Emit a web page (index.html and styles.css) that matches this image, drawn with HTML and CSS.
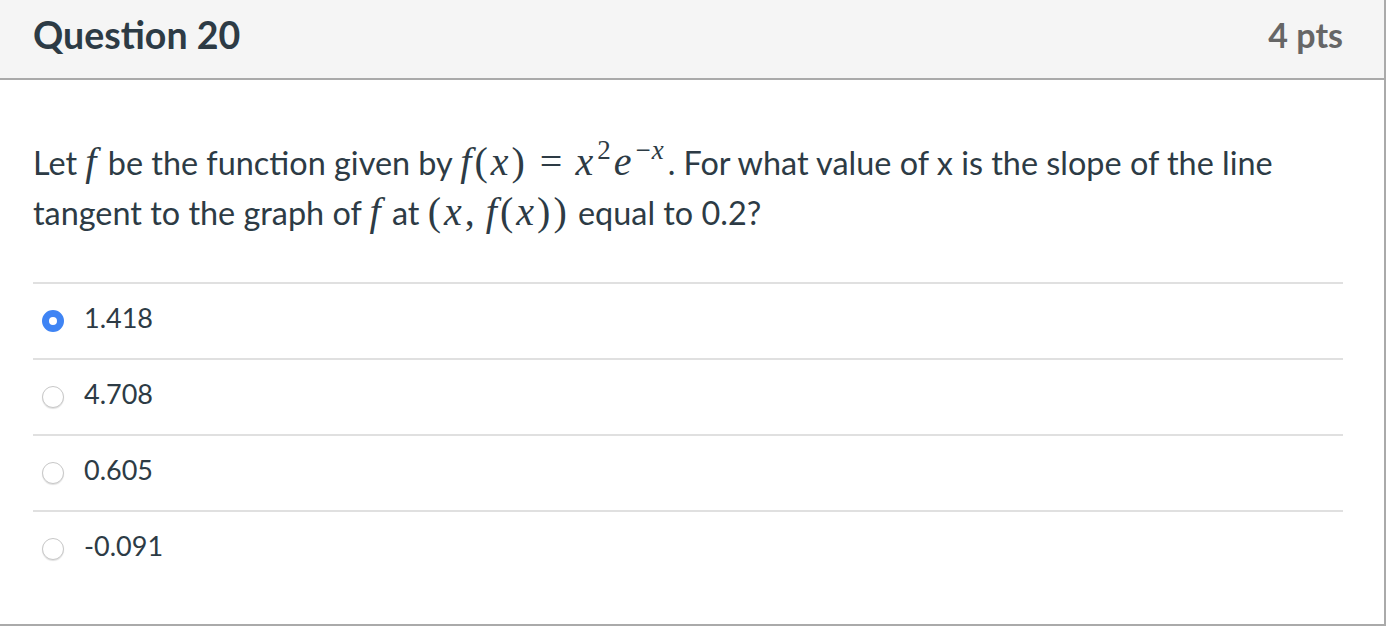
FILE: index.html
```html
<!DOCTYPE html>
<html>
<head>
<meta charset="utf-8">
<link rel="stylesheet" href="styles.css">
</head>
<body>
<div class="card">
  <div class="header">
    <div class="title">Question 20</div>
    <div class="pts">4 pts</div>
  </div>
  <div class="body">
    <div class="qtext">Let <span class="m">f</span> be the function given by <span class="m">f</span><span class="mr">(</span><span class="m">x</span><span class="mr">)</span><span class="mr eq">=</span><span class="m">x</span><sup class="sup">2</sup><span class="m">e</span><sup class="sup"><span class="mr">&minus;</span><span class="m">x</span></sup>. For what value of x is the slope of the line<br>tangent to the graph of <span class="m">f</span> at <span class="mr">(</span><span class="m">x</span><span class="mr comma">,</span><span class="m">f</span><span class="mr">(</span><span class="m">x</span><span class="mr">))</span> equal to 0.2?</div>
    <div class="answers">
      <div class="answer"><span class="radio checked"></span><span class="atext">1.418</span></div>
      <div class="answer"><span class="radio"></span><span class="atext">4.708</span></div>
      <div class="answer"><span class="radio"></span><span class="atext">0.605</span></div>
      <div class="answer"><span class="radio"></span><span class="atext">-0.091</span></div>
    </div>
  </div>
</div>
</body>
</html>
```
FILE: styles.css
```css
html, body {
  margin: 0;
  padding: 0;
  background: #ffffff;
}
body {
  font-family: Lato, "Open Sans", sans-serif;
  color: #2d3b45;
}
.card {
  width: 1384px;
  border-right: 2px solid #aaaaaa;
  border-bottom: 2px solid #aaaaaa;
  background: #ffffff;
}
.header {
  height: 78px;
  background: #f5f5f5;
  border-bottom: 2px solid #aaaaaa;
  display: flex;
  align-items: center;
  justify-content: space-between;
  padding: 0 41px 0 33px;
}
.title {
  font-weight: 700;
  font-size: 37.5px;
  color: #2d3b45;
  margin-top: -9px;
}
.pts {
  font-weight: 700;
  font-size: 34px;
  color: #666666;
  margin-top: -9px;
}
.body {
  padding: 58px 41px 38px 33px;
}
.qtext {
  font-size: 32.4px;
  line-height: 50px;
}
.m {
  font-family: "Liberation Serif", "DejaVu Serif", serif;
  font-style: italic;
  font-size: 40px;
  letter-spacing: 3px;
  line-height: 0;
}
.mr {
  font-family: "Liberation Serif", "DejaVu Serif", serif;
  font-size: 40px;
  letter-spacing: 3px;
  line-height: 0;
}
.eq {
  margin: 0 10px 0 12px;
}
.comma {
  margin-right: 8px;
}
.sup {
  font-family: "Liberation Serif", serif;
  font-size: 27px;
  vertical-align: 16px;
  line-height: 0;
  margin-left: 1px;
  margin-right: 3px;
}
.sup .m, .sup .mr {
  font-size: 27px;
  letter-spacing: 1px;
}
.answers {
  margin-top: 44px;
}
.answer {
  height: 74px;
  border-top: 2px solid #e0e0e0;
  display: flex;
  align-items: center;
}
.radio {
  width: 22px;
  height: 22px;
  box-sizing: border-box;
  border-radius: 50%;
  border: 1px solid #c8c8c8;
  background: #ffffff;
  box-shadow: 0 1px 1px rgba(0,0,0,0.12);
  margin-left: 9px;
  margin-right: 20px;
}
.radio.checked {
  border: 7px solid #3f84f4;
  box-shadow: none;
}
.atext {
  font-size: 27px;
  margin-top: -8px;
}
```
